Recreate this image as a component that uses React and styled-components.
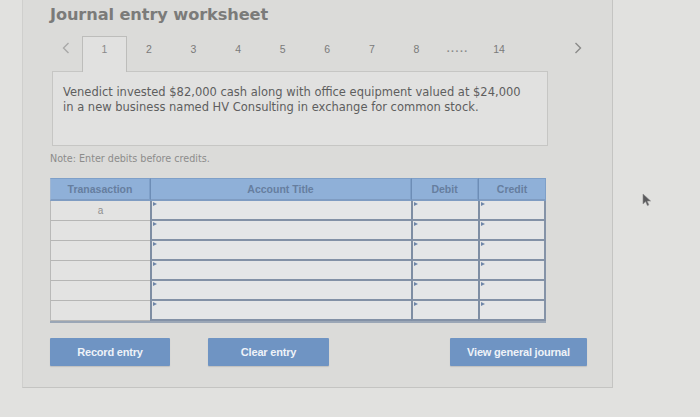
import React from "react";
import styled, { createGlobalStyle } from "styled-components";

const GlobalStyle = createGlobalStyle`
  html, body {
    margin: 0;
    padding: 0;
    background: #e1e1df;
  }
  * {
    box-sizing: border-box;
  }
`;

const Page = styled.div`
  position: relative;
  width: 700px;
  height: 417px;
  overflow: hidden;
  padding-left: 22px;
  background: #e1e1df;
`;

const Panel = styled.div`
  width: 591px;
  height: 388px;
  background: #dbdbd9;
  border-left: 1px solid #cfcfcd;
  border-right: 1px solid #c4c4c2;
  border-bottom: 1px solid #c4c4c2;
  padding: 5px 0 0 27px;
  display: flex;
  flex-direction: column;
`;

const Title = styled.h1`
  margin: 0;
  height: 23px;
  font-family: "DejaVu Sans", Verdana, sans-serif;
  font-size: 16.2px;
  font-weight: bold;
  color: #7b7b7a;
  letter-spacing: -0.1px;
`;

const TabRow = styled.div`
  display: flex;
  align-items: stretch;
  width: 541px;
  height: 35px;
  margin-top: 8px;
  font-family: "Liberation Sans", Arial, sans-serif;
  font-size: 10.5px;
  color: #7a7a7a;
`;

const Arrow = styled.div`
  width: ${(p) => p.$w}px;
  display: flex;
  align-items: center;
  justify-content: center;
  padding-bottom: 12px;
  margin-left: ${(p) => (p.$push ? "auto" : "0")};
`;

const Tab = styled.div`
  width: 44.6px;
  display: flex;
  align-items: center;
  justify-content: center;
  padding-bottom: 12px;
  position: relative;
  z-index: 1;
  background: ${(p) => (p.$active ? "#e1e1e0" : "transparent")};
  border: 1px solid ${(p) => (p.$active ? "#bdbdbb" : "transparent")};
  border-bottom: none;
  margin-bottom: -1px;
  color: ${(p) => (p.$active ? "#8a8a8a" : "#7a7a7a")};
`;

const Dots = styled.div`
  width: 38px;
  display: flex;
  align-items: center;
  justify-content: center;
  padding-bottom: 12px;
  letter-spacing: 1.5px;
  font-weight: bold;
  color: #8a8a8a;
`;

const Prompt = styled.div`
  margin-left: 2px;
  width: 496px;
  height: 75px;
  background: #e1e1e0;
  border: 1px solid #c6c6c4;
  padding: 13px 10px 0 10px;
  font-family: "DejaVu Sans", Verdana, sans-serif;
  font-size: 11.5px;
  line-height: 15px;
  color: #5e5e5e;
  white-space: nowrap;
`;

const Note = styled.div`
  margin-top: 7px;
  height: 25px;
  font-family: "DejaVu Sans", Verdana, sans-serif;
  font-size: 9.6px;
  color: #8c8c8b;
`;

const Table = styled.div`
  display: grid;
  grid-template-columns: 100px 261px 67px 68px;
  grid-template-rows: 23px repeat(6, 20px);
  width: 496px;
  border-bottom: 2px solid #9aa6b6;
`;

const Head = styled.div`
  display: flex;
  align-items: center;
  justify-content: center;
  background: #8fb0d8;
  border: 1px solid #7e9fc8;
  border-left: ${(p) => (p.$first ? "1px solid #9fb6d3" : "1px solid #6d8db6")};
  border-bottom: 2px solid #7f9cc2;
  font-family: "Liberation Sans", Arial, sans-serif;
  font-size: 10.5px;
  font-weight: bold;
  color: #667e9f;
`;

const TxCell = styled.div`
  display: flex;
  align-items: center;
  justify-content: center;
  background: #e3e3e2;
  border-left: 1px solid #b9b9b8;
  border-bottom: 1px solid #b6b6b5;
  font-family: "Liberation Sans", Arial, sans-serif;
  font-size: 10px;
  color: #8f8f8f;
`;

const InputCell = styled.div`
  position: relative;
  border-left: 2px solid #7f8ea3;
  border-right: ${(p) => (p.$last ? "2px solid #8593a7" : "none")};
  border-bottom: 2px solid #8391a6;
  background: #e5e6e7;

  &::before {
    content: "";
    position: absolute;
    left: 1px;
    top: 1px;
    border-top: 2.5px solid transparent;
    border-bottom: 2.5px solid transparent;
    border-left: 4px solid #6f86a8;
  }
`;

const Field = styled.input`
  width: 100%;
  height: 100%;
  border: none;
  background: transparent;
  outline: none;
`;

const ButtonRow = styled.div`
  display: flex;
  align-items: center;
  width: 537px;
  margin-top: 15px;
`;

const Button = styled.button`
  width: ${(p) => p.$w}px;
  height: 28px;
  margin-left: ${(p) => p.$ml};
  border: none;
  border-radius: 1px;
  background: #6f94c3;
  color: #eef2f8;
  font-family: "Liberation Sans", Arial, sans-serif;
  font-size: 11px;
  font-weight: bold;
  letter-spacing: -0.2px;
  box-shadow: 0 1px 1px rgba(0, 0, 0, 0.12);
`;

const Cursor = styled.svg`
  position: absolute;
  left: 642px;
  top: 193px;
`;

const tabs = ["1", "2", "3", "4", "5", "6", "7", "8"];
const rows = ["a", "", "", "", "", ""];

export default function App() {
  return (
    <>
      <GlobalStyle />
      <Page>
        <Panel>
          <Title>Journal entry worksheet</Title>
          <TabRow>
            <Arrow $w={32}>
              <svg width="8" height="12" viewBox="0 0 8 12">
                <path d="M6.5 1 L1.5 6 L6.5 11" fill="none" stroke="#a9a9a8" strokeWidth="1.4" />
              </svg>
            </Arrow>
            {tabs.map((t) => (
              <Tab key={t} $active={t === "1"}>
                {t}
              </Tab>
            ))}
            <Dots>.....</Dots>
            <Tab>14</Tab>
            <Arrow $w={26} $push>
              <svg width="8" height="12" viewBox="0 0 8 12">
                <path d="M1.5 1 L6.5 6 L1.5 11" fill="none" stroke="#8a8a89" strokeWidth="1.4" />
              </svg>
            </Arrow>
          </TabRow>
          <Prompt>
            Venedict invested $82,000 cash along with office equipment valued at $24,000
            <br />
            in a new business named HV Consulting in exchange for common stock.
          </Prompt>
          <Note>Note: Enter debits before credits.</Note>
          <Table>
            <Head $first>Tranasaction</Head>
            <Head>Account Title</Head>
            <Head>Debit</Head>
            <Head>Credit</Head>
            {rows.map((r, i) => (
              <React.Fragment key={i}>
                <TxCell>{r}</TxCell>
                <InputCell>
                  <Field />
                </InputCell>
                <InputCell>
                  <Field />
                </InputCell>
                <InputCell $last>
                  <Field />
                </InputCell>
              </React.Fragment>
            ))}
          </Table>
          <ButtonRow>
            <Button $w={120} $ml="0">Record entry</Button>
            <Button $w={121} $ml="38px">Clear entry</Button>
            <Button $w={137} $ml="auto">View general journal</Button>
          </ButtonRow>
        </Panel>
        <Cursor width="10" height="14" viewBox="0 0 10 14">
          <path d="M1 1 L1 11 L3.6 8.6 L5.4 12.6 L6.9 11.9 L5.1 8 L8.6 8 Z" fill="#5a5a5c" stroke="#8a8a8c" strokeWidth="0.6" />
        </Cursor>
      </Page>
    </>
  );
}
